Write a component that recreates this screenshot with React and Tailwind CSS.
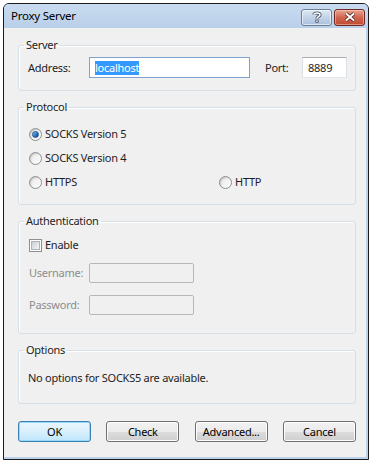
import React from 'react';

const font = { fontFamily: '"Noto Sans", "Open Sans", sans-serif' };

const Radio = ({ checked }) => (
  <span className="relative flex h-[13px] w-[13px] shrink-0 items-center justify-center rounded-full border border-[#8e8f8f] bg-gradient-to-br from-[#e6e6e6] to-[#ffffff] shadow-[inset_1px_1px_1px_rgba(0,0,0,0.15)]">
    {checked && (
      <span className="h-[7px] w-[7px] rounded-full border border-[#1d4f86] bg-gradient-to-br from-[#8ccaf5] via-[#2e82c8] to-[#0f4a85]" />
    )}
  </span>
);

const Checkbox = () => (
  <span className="flex h-[13px] w-[13px] shrink-0 items-center justify-center border border-[#8e8f8f] bg-white">
    <span className="h-[9px] w-[9px] border border-[#aeb3b9] bg-gradient-to-br from-[#cbcfd5] to-[#f6f6f6]" />
  </span>
);

const GroupBox = ({ title, className, children }) => (
  <fieldset className={`m-0 w-[338px] rounded-[3px] border border-[#d5dfe5] p-0 shadow-[inset_1px_1px_0_#ffffff] ${className}`}>
    <legend className="ml-[5px] px-[2px] text-[11px] leading-[14px] tracking-[-0.25px] text-[#1e1e1e]">{title}</legend>
    {children}
  </fieldset>
);

const Button = ({ children, isDefault }) => (
  <button
    className={`h-[21px] w-[73px] rounded-[3px] border text-[11px] leading-[14px] tracking-[-0.25px] text-black ${
      isDefault
        ? 'border-[#3c7fb1] bg-gradient-to-b from-[#eaf6fd] via-[#d9f0fc] to-[#bee6fd] shadow-[inset_0_0_0_1px_#96d9f9]'
        : 'border-[#707070] bg-[linear-gradient(#f2f2f2_0%,#ebebeb_50%,#dddddd_51%,#cfcfcf_100%)] shadow-[inset_0_0_0_1px_#fcfcfc]'
    }`}
  >
    {children}
  </button>
);

export default function App() {
  return (
    <div className="h-[461px] w-[371px] overflow-hidden bg-white pl-[3px] pt-[3px]" style={font}>
      <div className="flex h-[457px] w-[366px] flex-col rounded-t-[6px] border border-[#1b1b1b] bg-[#bcd2ea]">
        {/* Title bar */}
        <div className="flex h-[24px] items-center justify-between rounded-t-[5px] bg-gradient-to-b from-[#c9dbf0] to-[#b9d0ea] pl-[7px] pr-[3px]">
          <span className="text-[11.5px] leading-[14px] tracking-[-0.25px] text-black">Proxy Server</span>
          <div className="flex items-center gap-[2px] pt-[2px]">
            <div className="flex h-[17px] w-[31px] items-center justify-center rounded-[3px] border border-[#6a7f98] bg-gradient-to-b from-[#dfe8f3] via-[#c2d3e7] to-[#a9c0dc] shadow-[inset_0_0_0_1px_rgba(255,255,255,0.6)]">
              <svg width="10" height="12" viewBox="0 0 10 12">
                <path d="M2 3.5 C2 1.5 8 1.5 8 3.8 C8 5.6 5 5.6 5 7.5" fill="none" stroke="#3f4d60" strokeWidth="3.2" />
                <path d="M2 3.5 C2 1.5 8 1.5 8 3.8 C8 5.6 5 5.6 5 7.5" fill="none" stroke="#ffffff" strokeWidth="1.6" />
                <rect x="3.4" y="8.6" width="3.2" height="3" fill="#3f4d60" />
                <rect x="4.2" y="9.4" width="1.6" height="1.4" fill="#ffffff" />
              </svg>
            </div>
            <div className="flex h-[17px] w-[31px] items-center justify-center rounded-[3px] border border-[#6e2a22] bg-gradient-to-b from-[#e8a493] via-[#d0654f] to-[#c14a33] shadow-[inset_0_0_0_1px_rgba(255,210,200,0.5)]">
              <svg width="12" height="10" viewBox="0 0 12 10">
                <path d="M2 1.5 L10 8.5 M10 1.5 L2 8.5" stroke="#4b1a14" strokeWidth="3.6" />
                <path d="M2 1.5 L10 8.5 M10 1.5 L2 8.5" stroke="#ffffff" strokeWidth="2" />
              </svg>
            </div>
          </div>
        </div>

        {/* Client area */}
        <div className="mb-[2px] mr-[2px] flex flex-1 flex-col bg-[#f0f0f0] pl-[14px] pt-[10px] text-[11px] tracking-[-0.25px]">
          <GroupBox title="Server">
            <div className="flex items-center pb-[12px] pl-[9px] pt-[5px] leading-[14px] text-[#1e1e1e]">
              <span className="w-[61px]">Address:</span>
              <div className="flex h-[21px] w-[161px] items-center border border-[#7da2ce] bg-white pl-[5px]">
                <span className="bg-[#3399ff] text-white">localhost</span>
              </div>
              <span className="ml-[15px] w-[37px]">Port:</span>
              <div className="flex h-[21px] w-[45px] items-center border border-[#abadb3] border-b-[#e3e9ef] border-x-[#dbdfe6] bg-white pl-[5px]">
                8889
              </div>
            </div>
          </GroupBox>

          <GroupBox title="Protocol" className="mt-[9px]">
            <div className="flex flex-col gap-[8px] pb-[14px] pl-[10px] pt-[12px] leading-[16px] text-[#1e1e1e]">
              <label className="flex items-center gap-[3px]">
                <Radio checked />
                <span>SOCKS Version 5</span>
              </label>
              <label className="flex items-center gap-[3px]">
                <Radio />
                <span>SOCKS Version 4</span>
              </label>
              <div className="flex items-center">
                <label className="flex w-[190px] items-center gap-[3px]">
                  <Radio />
                  <span>HTTPS</span>
                </label>
                <label className="flex items-center gap-[3px]">
                  <Radio />
                  <span>HTTP</span>
                </label>
              </div>
            </div>
          </GroupBox>

          <GroupBox title="Authentication" className="mt-[9px]">
            <div className="flex flex-col pb-[18px] pl-[10px] pt-[9px] leading-[16px]">
              <label className="flex items-center gap-[3px] text-[#1e1e1e]">
                <Checkbox />
                <span>Enable</span>
              </label>
              <div className="mt-[10px] flex items-center text-[#8d8d8d]">
                <span className="w-[60px]">Username:</span>
                <div className="h-[20px] w-[105px] rounded-[2px] border border-[#b7b7b7] bg-[#f0f0f0]" />
              </div>
              <div className="mt-[12px] flex items-center text-[#8d8d8d]">
                <span className="w-[60px]">Password:</span>
                <div className="h-[20px] w-[105px] rounded-[2px] border border-[#b7b7b7] bg-[#f0f0f0]" />
              </div>
            </div>
          </GroupBox>

          <GroupBox title="Options" className="mt-[9px]">
            <div className="pb-[18px] pl-[9px] pt-[14px] leading-[14px] text-[#1e1e1e]">
              No options for SOCKS5 are available.
            </div>
          </GroupBox>

          <div className="mt-[17px] flex w-[338px] justify-between">
            <Button isDefault>OK</Button>
            <Button>Check</Button>
            <Button>Advanced...</Button>
            <Button>Cancel</Button>
          </div>
        </div>
      </div>
    </div>
  );
}
